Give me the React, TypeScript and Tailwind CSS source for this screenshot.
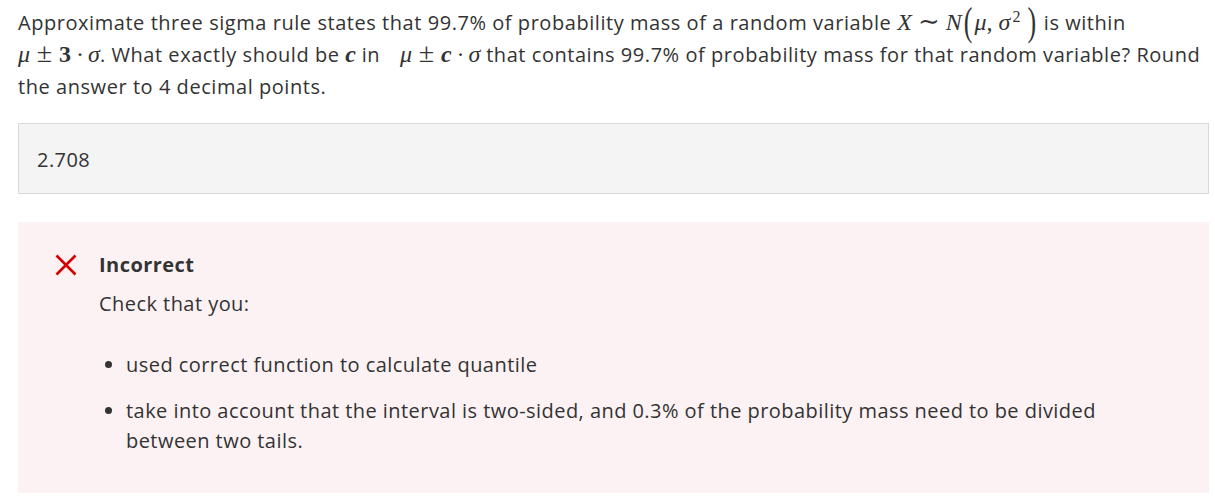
import React from 'react';

const mathFont = { fontFamily: '"Liberation Serif", "DejaVu Serif", serif' };

function M({ children }: { children: React.ReactNode }) {
  return (
    <span className="text-[24px] leading-none whitespace-nowrap tracking-normal" style={mathFont}>
      {children}
    </span>
  );
}

const I = ({ children, bold }: { children: React.ReactNode; bold?: boolean }) => (
  <i className={bold ? 'font-bold' : ''}>{children}</i>
);

// KaTeX-like spacing for binary operators and relations
const Pm = () => <span className="inline-block w-[19px] mx-[5px] text-center text-[28px] leading-none">±</span>;
const Dot = () => <span className="inline-block w-[7px] mx-[5px] text-center">·</span>;
const Sim = () => <span className="inline-flex justify-center w-[22px] mx-[6px] text-[26px] leading-none">∼</span>;

const Paren = ({ children }: { children: React.ReactNode }) => (
  <span className="inline-block text-[26px] scale-y-[1.5] translate-y-[1px] mx-[2px]">{children}</span>
);

export default function App() {
  return (
    <div className="w-[1215px] min-h-[498px] bg-white pl-[18px] pr-[6px] pt-[7px] text-[#333] font-['Open_Sans',sans-serif]">
      <p className="text-[20px] leading-[32px] tracking-[0.55px] -mr-[4px]">
        Approximate three sigma rule states that 99.7% of probability mass of a random variable{' '}
        <M>
          <I>X</I>
          <Sim />
          <I>N</I>
          <Paren>(</Paren>
          <I>μ</I>,<span className="ml-[6px]" />
          <I>σ</I>
          <sup className="text-[16px] ml-[2px] mr-[5px]">2</sup>
          <Paren>)</Paren>
        </M>{' '}
        is within{' '}
        <M>
          <I>μ</I>
          <Pm />
          <b>3</b>
          <Dot />
          <I>σ</I>
        </M>
        . What exactly should be{' '}
        <M>
          <I bold>c</I>
        </M>{' '}
        in{' '}
        <M>
          <span className="ml-[14px]" />
          <I>μ</I>
          <Pm />
          <I bold>c</I>
          <Dot />
          <I>σ</I>
        </M>{' '}
        that contains 99.7% of probability mass for that random variable? Round the answer to 4 decimal points.
      </p>

      <div className="mt-[20px] h-[71px] border border-[#d9d9d9] bg-[#f4f4f4] flex items-center px-[18px] pt-[2px] text-[20px] tracking-[0.45px]">
        2.708
      </div>

      <div className="mt-[28px] w-full bg-[#fcf2f3] pl-[37px] pr-[60px] pt-[28px] pb-[37px] flex gap-[22px] text-[20px] tracking-[0.45px]">
        <svg width="22" height="22" viewBox="0 0 22 22" className="mt-[4px] shrink-0">
          <path d="M1.5 1.5 L20.5 20.5 M20.5 1.5 L1.5 20.5" stroke="#d40000" strokeWidth="2.6" />
        </svg>
        <div>
          <div className="font-bold leading-[30px]">Incorrect</div>
          <div className="mt-[9px] leading-[30px]">Check that you:</div>
          <ul className="mt-[31px] list-disc pl-[27px] leading-[30px] space-y-[16px]">
            <li>used correct function to calculate quantile</li>
            <li>
              take into account that the interval is two-sided, and 0.3% of the probability mass need to be divided
              between two tails.
            </li>
          </ul>
        </div>
      </div>
    </div>
  );
}
